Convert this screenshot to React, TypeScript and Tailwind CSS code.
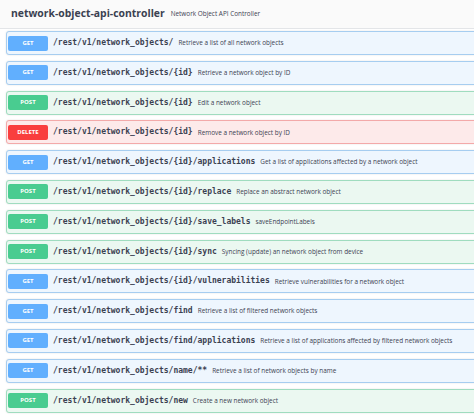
type Method = 'GET' | 'POST' | 'DELETE';

interface Op {
  method: Method;
  path: string;
  summary: string;
}

const ops: Op[] = [
  { method: 'GET', path: '/rest/v1/network_objects/', summary: 'Retrieve a list of all network objects' },
  { method: 'GET', path: '/rest/v1/network_objects/{id}', summary: 'Retrieve a network object by ID' },
  { method: 'POST', path: '/rest/v1/network_objects/{id}', summary: 'Edit a network object' },
  { method: 'DELETE', path: '/rest/v1/network_objects/{id}', summary: 'Remove a network object by ID' },
  { method: 'GET', path: '/rest/v1/network_objects/{id}/applications', summary: 'Get a list of applications affected by a network object' },
  { method: 'POST', path: '/rest/v1/network_objects/{id}/replace', summary: 'Replace an abstract network object' },
  { method: 'POST', path: '/rest/v1/network_objects/{id}/save_labels', summary: 'saveEndpointLabels' },
  { method: 'POST', path: '/rest/v1/network_objects/{id}/sync', summary: 'Syncing (update) an network object from device' },
  { method: 'GET', path: '/rest/v1/network_objects/{id}/vulnerabilities', summary: 'Retrieve vulnerabilities for a network object' },
  { method: 'GET', path: '/rest/v1/network_objects/find', summary: 'Retrieve a list of filtered network objects' },
  { method: 'GET', path: '/rest/v1/network_objects/find/applications', summary: 'Retrieve a list of applications affected by filtered network objects' },
  { method: 'GET', path: '/rest/v1/network_objects/name/**', summary: 'Retrieve a list of network objects by name' },
  { method: 'POST', path: '/rest/v1/network_objects/new', summary: 'Create a new network object' },
];

const blockTone: Record<Method, string> = {
  GET: 'bg-[#eef6fe] border-[#a6cdf0]',
  POST: 'bg-[#ebf8f1] border-[#9fdcbf]',
  DELETE: 'bg-[#fdeaea] border-[#f3a9a9]',
};

const badgeTone: Record<Method, string> = {
  GET: 'bg-[#61affe]',
  POST: 'bg-[#49cc90]',
  DELETE: 'bg-[#f93e3e]',
};

function OpBlock({ op }: { op: Op }) {
  return (
    <div
      className={`flex h-[24px] items-center rounded-[3px] border pl-[1px] shadow-[0_0_2px_rgba(0,0,0,0.12)] ${blockTone[op.method]}`}
    >
      <span
        className={`flex h-[15px] w-[40px] shrink-0 items-center justify-center rounded-[2px] font-['Open_Sans',sans-serif] text-[6px] font-bold text-white ${badgeTone[op.method]}`}
      >
        {op.method}
      </span>
      <span className="ml-[5px] whitespace-nowrap font-['DejaVu_Sans_Mono',monospace] text-[8px] font-bold text-[#3b4151]">
        {op.path}
      </span>
      <span className="ml-[5px] whitespace-nowrap font-['Open_Sans',sans-serif] text-[6.4px] text-[#3b4151]">
        {op.summary}
      </span>
    </div>
  );
}

export default function App() {
  return (
    <div className="h-[418px] w-[474px] overflow-hidden bg-white">
      <div className="flex h-[29px] items-center gap-[6px] border-b border-[#e3e5e8] bg-[#fafafa] pl-[11px]">
        <span className="font-['Open_Sans',sans-serif] text-[10.4px] font-bold text-[#3b4151]">
          network-object-api-controller
        </span>
        <span className="font-['Open_Sans',sans-serif] text-[6.4px] text-[#3b4151]">
          Network Object API Controller
        </span>
      </div>
      <div className="-mr-[10px] flex flex-col gap-[5.8px] pl-[6px] pt-[2px]">
        {ops.map((op, i) => (
          <OpBlock key={i} op={op} />
        ))}
      </div>
    </div>
  );
}
